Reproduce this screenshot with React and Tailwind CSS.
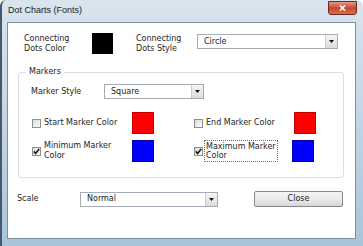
import React from "react";

const font = { fontFamily: '"DejaVu Sans", Verdana, sans-serif' };

function Check({ checked }) {
  return (
    <span className="w-[9px] h-[9px] shrink-0 border border-[#8e8f8f] bg-gradient-to-br from-[#dcdcdc] to-[#fbfbfb] flex items-center justify-center">
      {checked && (
        <svg width="7" height="7" viewBox="0 0 7 7">
          <path d="M0.8 3.4 L2.6 5.4 L6.2 1" fill="none" stroke="#1b1b1b" strokeWidth="1.6" />
        </svg>
      )}
    </span>
  );
}

function Combo({ value, width }) {
  return (
    <div className={`${width} h-[15px] border border-[#a5acb5] bg-white flex items-center`}>
      <span className="flex-1 pl-[6px] text-[8px] leading-none text-[#222]">{value}</span>
      <span className="w-[12px] h-[13px] border-l border-[#c9cdd2] bg-gradient-to-b from-[#f6f6f6] to-[#dcdcdc] flex items-center justify-center">
        <svg width="5" height="3" viewBox="0 0 5 3">
          <path d="M0 0 H5 L2.5 3 Z" fill="#111" />
        </svg>
      </span>
    </div>
  );
}

function Swatch({ color }) {
  return <div className={`w-[22px] h-[22px] shrink-0 ${color}`} />;
}

export default function App() {
  return (
    <div
      className="w-[363px] h-[246px] bg-gradient-to-b from-[#d9e4ee] via-[#c3d5e4] to-[#a9c4da] border-l-[2px] border-[#46586a] rounded-t-[6px] overflow-hidden"
      style={font}
    >
      {/* title bar */}
      <div className="h-[22px] flex items-center justify-between">
        <span className="pl-[6px] text-[9px] text-[#1a1a1a]" style={{ fontFamily: '"Liberation Sans", Arial, sans-serif' }}>
          Dot Charts (Fonts)
        </span>
        <div className="w-[29px] h-[14px] mr-[6px] mb-[6px] rounded-b-[3px] border border-[#6b2a1d] bg-gradient-to-b from-[#e49a86] via-[#c8462e] to-[#d6704f] flex items-center justify-center">
          <svg width="7" height="6" viewBox="0 0 7 6">
            <path d="M1 0.5 L6 5.5 M6 0.5 L1 5.5" stroke="#fff" strokeWidth="1.6" />
          </svg>
        </div>
      </div>

      {/* client area */}
      <div className="ml-[5px] w-[349px] h-[217px] border border-[#7d8f9f] bg-white text-[8px] text-[#1e1e1e]">
        {/* connecting dots */}
        <div className="flex items-start pt-[10px] pl-[16px]">
          <div className="w-[68px] leading-[10px] pt-[1px]">
            Connecting<br />Dots Color
          </div>
          <div className="w-[21px] h-[21px] bg-black" />
          <div className="w-[61px] ml-[23px] leading-[10px] pt-[1px]">
            Connecting<br />Dots Style
          </div>
          <div className="mt-[1px]">
            <Combo value="Circle" width="w-[141px]" />
          </div>
        </div>

        {/* markers group */}
        <fieldset className="ml-[10px] mt-[13px] w-[326px] border border-[#d5dfe5] rounded-[3px] pb-[15px]">
          <legend className="ml-[7px] px-[3px] leading-[10px]">Markers</legend>

          <div className="flex items-center mt-[7px] pl-[12px]">
            <span className="w-[73px]">Marker Style</span>
            <Combo value="Square" width="w-[100px]" />
          </div>

          <div className="flex items-center mt-[13px] pl-[13px]">
            <div className="w-[162px] flex items-center">
              <Check />
              <span className="w-[88px] ml-[3px]">Start Marker Color</span>
              <Swatch color="bg-[#ff0000] border border-[#c00000]" />
            </div>
            <div className="flex items-center">
              <Check />
              <span className="w-[88px] ml-[3px]">End Marker Color</span>
              <Swatch color="bg-[#ff0000] border border-[#c00000]" />
            </div>
          </div>

          <div className="flex items-center mt-[6px] pl-[13px]">
            <div className="w-[162px] flex items-center">
              <Check checked />
              <span className="w-[88px] ml-[3px] leading-[10px]">
                Minimum Marker<br />Color
              </span>
              <Swatch color="bg-[#0000ff] border border-[#0000b0]" />
            </div>
            <div className="flex items-center">
              <Check checked />
              <div className="w-[88px] ml-[1px]">
                <span className="inline-block border border-dotted border-[#6d6d6d] px-[1px] leading-[9px] py-px">
                  Maximum Marker<br />Color
                </span>
              </div>
              <Swatch color="bg-[#0000ff] border border-[#0000b0]" />
            </div>
          </div>
        </fieldset>

        {/* bottom row */}
        <div className="flex items-center mt-[13px] pl-[9px]">
          <span className="w-[63px]">Scale</span>
          <Combo value="Normal" width="w-[138px]" />
          <button className="ml-[36px] w-[89px] h-[16px] border border-[#8a8a8a] rounded-[2px] bg-gradient-to-b from-[#f4f4f4] via-[#ebebeb] to-[#d6d6d6] text-[8px] text-[#1e1e1e] leading-none">
            Close
          </button>
        </div>
      </div>
    </div>
  );
}
